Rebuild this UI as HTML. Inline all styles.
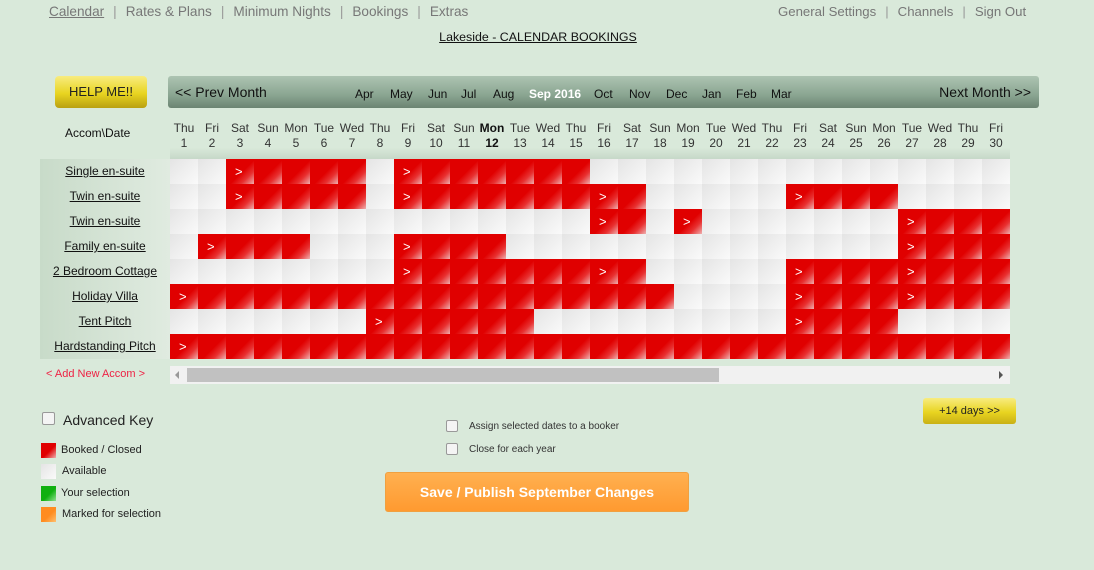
<!DOCTYPE html>
<html><head><meta charset="utf-8"><style>
*{box-sizing:border-box;margin:0;padding:0}
body{width:1094px;height:570px;background:#d9e9da;font-family:"Liberation Sans",sans-serif;position:relative;overflow:hidden;color:#222}
.abs{position:absolute}
.nav{top:4px;font-size:13.6px;color:#777}
.nav span{color:#999;margin:0 9px}
.title{left:0;width:1076px;text-align:center;top:30px;font-size:12.4px;text-decoration:underline;color:#111}
.help{left:55px;top:76px;width:92px;height:32px;border-radius:4px;background:linear-gradient(#f8ec80,#e8d420 55%,#b9a012);font-size:13px;text-align:center;line-height:32px;color:#222}
.bar{left:168px;top:76px;width:871px;height:32px;border-radius:3px;background:linear-gradient(#adc4b2,#8aa591 60%,#6b8472)}
.bar .pm{position:absolute;left:7px;top:8px;font-size:14px;color:#111}
.bar .nm{position:absolute;right:8px;top:8px;font-size:14px;color:#111}
.bar .mo{position:absolute;top:11px;font-size:12px;color:#111}
.hd{position:absolute;top:121px;width:28px;text-align:center;font-size:12px;line-height:15px;color:#333;height:38px;background:linear-gradient(#d9e9da 70%,#c6d8c8)}
.lab{position:absolute;left:40px;width:130px;height:25px;line-height:25px;text-align:center;font-size:12px;text-decoration:underline;color:#111;background:linear-gradient(90deg,#c8dbc9,#e0ebe0)}
.row{position:absolute;left:170px;display:flex}
.row i{display:block;width:28px;height:25px;font-style:normal;color:#fff;font-size:13px;line-height:25px;padding-left:9px}
.w{background:linear-gradient(135deg,#e4e4e4,#fafafa)}
.r,.a{background:linear-gradient(135deg,#e00000 55%,#e83030 75%,#efb0b0)}
.cb{width:12px;height:12px;border:1px solid #999;border-radius:2px;background:#f4f4f4}
.sw{width:15px;height:15px}
.lg{font-size:11px;color:#222}
</style></head><body>
<div class="abs nav" style="left:49px"><u style="color:#777">Calendar</u><span>|</span>Rates &amp; Plans<span>|</span>Minimum Nights<span>|</span>Bookings<span>|</span>Extras</div>
<div class="abs nav" style="left:778px;font-size:13.2px">General Settings<span>|</span>Channels<span>|</span>Sign Out</div>
<div class="abs title">Lakeside - CALENDAR BOOKINGS</div>
<div class="abs help">HELP ME!!</div>
<div class="abs bar"><div class="pm">&lt;&lt; Prev Month</div>
<div class="mo" style="left:187px">Apr</div><div class="mo" style="left:222px">May</div><div class="mo" style="left:260px">Jun</div><div class="mo" style="left:293px">Jul</div><div class="mo" style="left:325px">Aug</div><div class="mo" style="left:361px;color:#fff;font-weight:bold">Sep 2016</div><div class="mo" style="left:426px">Oct</div><div class="mo" style="left:461px">Nov</div><div class="mo" style="left:498px">Dec</div><div class="mo" style="left:534px">Jan</div><div class="mo" style="left:568px">Feb</div><div class="mo" style="left:603px">Mar</div>
<div class="nm">Next Month &gt;&gt;</div></div>
<div class="abs" style="left:65px;top:126px;font-size:12px;color:#111">Accom\Date</div>
<div class="hd" style="left:170px">Thu<br>1</div><div class="hd" style="left:198px">Fri<br>2</div><div class="hd" style="left:226px">Sat<br>3</div><div class="hd" style="left:254px">Sun<br>4</div><div class="hd" style="left:282px">Mon<br>5</div><div class="hd" style="left:310px">Tue<br>6</div><div class="hd" style="left:338px">Wed<br>7</div><div class="hd" style="left:366px">Thu<br>8</div><div class="hd" style="left:394px">Fri<br>9</div><div class="hd" style="left:422px">Sat<br>10</div><div class="hd" style="left:450px">Sun<br>11</div><div class="hd" style="left:478px;font-weight:bold;color:#111">Mon<br>12</div><div class="hd" style="left:506px">Tue<br>13</div><div class="hd" style="left:534px">Wed<br>14</div><div class="hd" style="left:562px">Thu<br>15</div><div class="hd" style="left:590px">Fri<br>16</div><div class="hd" style="left:618px">Sat<br>17</div><div class="hd" style="left:646px">Sun<br>18</div><div class="hd" style="left:674px">Mon<br>19</div><div class="hd" style="left:702px">Tue<br>20</div><div class="hd" style="left:730px">Wed<br>21</div><div class="hd" style="left:758px">Thu<br>22</div><div class="hd" style="left:786px">Fri<br>23</div><div class="hd" style="left:814px">Sat<br>24</div><div class="hd" style="left:842px">Sun<br>25</div><div class="hd" style="left:870px">Mon<br>26</div><div class="hd" style="left:898px">Tue<br>27</div><div class="hd" style="left:926px">Wed<br>28</div><div class="hd" style="left:954px">Thu<br>29</div><div class="hd" style="left:982px">Fri<br>30</div>

<div class="lab" style="top:159px">Single en-suite</div>
<div class="lab" style="top:184px">Twin en-suite</div>
<div class="lab" style="top:209px">Twin en-suite</div>
<div class="lab" style="top:234px">Family en-suite</div>
<div class="lab" style="top:259px">2 Bedroom Cottage</div>
<div class="lab" style="top:284px">Holiday Villa</div>
<div class="lab" style="top:309px">Tent Pitch</div>
<div class="lab" style="top:334px">Hardstanding Pitch</div>

<div class="row" style="top:159px"><i class="w"></i><i class="w"></i><i class="a">&gt;</i><i class="r"></i><i class="r"></i><i class="r"></i><i class="r"></i><i class="w"></i><i class="a">&gt;</i><i class="r"></i><i class="r"></i><i class="r"></i><i class="r"></i><i class="r"></i><i class="r"></i><i class="w"></i><i class="w"></i><i class="w"></i><i class="w"></i><i class="w"></i><i class="w"></i><i class="w"></i><i class="w"></i><i class="w"></i><i class="w"></i><i class="w"></i><i class="w"></i><i class="w"></i><i class="w"></i><i class="w"></i></div>
<div class="row" style="top:184px"><i class="w"></i><i class="w"></i><i class="a">&gt;</i><i class="r"></i><i class="r"></i><i class="r"></i><i class="r"></i><i class="w"></i><i class="a">&gt;</i><i class="r"></i><i class="r"></i><i class="r"></i><i class="r"></i><i class="r"></i><i class="r"></i><i class="a">&gt;</i><i class="r"></i><i class="w"></i><i class="w"></i><i class="w"></i><i class="w"></i><i class="w"></i><i class="a">&gt;</i><i class="r"></i><i class="r"></i><i class="r"></i><i class="w"></i><i class="w"></i><i class="w"></i><i class="w"></i></div>
<div class="row" style="top:209px"><i class="w"></i><i class="w"></i><i class="w"></i><i class="w"></i><i class="w"></i><i class="w"></i><i class="w"></i><i class="w"></i><i class="w"></i><i class="w"></i><i class="w"></i><i class="w"></i><i class="w"></i><i class="w"></i><i class="w"></i><i class="a">&gt;</i><i class="r"></i><i class="w"></i><i class="a">&gt;</i><i class="w"></i><i class="w"></i><i class="w"></i><i class="w"></i><i class="w"></i><i class="w"></i><i class="w"></i><i class="a">&gt;</i><i class="r"></i><i class="r"></i><i class="r"></i></div>
<div class="row" style="top:234px"><i class="w"></i><i class="a">&gt;</i><i class="r"></i><i class="r"></i><i class="r"></i><i class="w"></i><i class="w"></i><i class="w"></i><i class="a">&gt;</i><i class="r"></i><i class="r"></i><i class="r"></i><i class="w"></i><i class="w"></i><i class="w"></i><i class="w"></i><i class="w"></i><i class="w"></i><i class="w"></i><i class="w"></i><i class="w"></i><i class="w"></i><i class="w"></i><i class="w"></i><i class="w"></i><i class="w"></i><i class="a">&gt;</i><i class="r"></i><i class="r"></i><i class="r"></i></div>
<div class="row" style="top:259px"><i class="w"></i><i class="w"></i><i class="w"></i><i class="w"></i><i class="w"></i><i class="w"></i><i class="w"></i><i class="w"></i><i class="a">&gt;</i><i class="r"></i><i class="r"></i><i class="r"></i><i class="r"></i><i class="r"></i><i class="r"></i><i class="a">&gt;</i><i class="r"></i><i class="w"></i><i class="w"></i><i class="w"></i><i class="w"></i><i class="w"></i><i class="a">&gt;</i><i class="r"></i><i class="r"></i><i class="r"></i><i class="a">&gt;</i><i class="r"></i><i class="r"></i><i class="r"></i></div>
<div class="row" style="top:284px"><i class="a">&gt;</i><i class="r"></i><i class="r"></i><i class="r"></i><i class="r"></i><i class="r"></i><i class="r"></i><i class="r"></i><i class="r"></i><i class="r"></i><i class="r"></i><i class="r"></i><i class="r"></i><i class="r"></i><i class="r"></i><i class="r"></i><i class="r"></i><i class="r"></i><i class="w"></i><i class="w"></i><i class="w"></i><i class="w"></i><i class="a">&gt;</i><i class="r"></i><i class="r"></i><i class="r"></i><i class="a">&gt;</i><i class="r"></i><i class="r"></i><i class="r"></i></div>
<div class="row" style="top:309px"><i class="w"></i><i class="w"></i><i class="w"></i><i class="w"></i><i class="w"></i><i class="w"></i><i class="w"></i><i class="a">&gt;</i><i class="r"></i><i class="r"></i><i class="r"></i><i class="r"></i><i class="r"></i><i class="w"></i><i class="w"></i><i class="w"></i><i class="w"></i><i class="w"></i><i class="w"></i><i class="w"></i><i class="w"></i><i class="w"></i><i class="a">&gt;</i><i class="r"></i><i class="r"></i><i class="r"></i><i class="w"></i><i class="w"></i><i class="w"></i><i class="w"></i></div>
<div class="row" style="top:334px"><i class="a">&gt;</i><i class="r"></i><i class="r"></i><i class="r"></i><i class="r"></i><i class="r"></i><i class="r"></i><i class="r"></i><i class="r"></i><i class="r"></i><i class="r"></i><i class="r"></i><i class="r"></i><i class="r"></i><i class="r"></i><i class="r"></i><i class="r"></i><i class="r"></i><i class="r"></i><i class="r"></i><i class="r"></i><i class="r"></i><i class="r"></i><i class="r"></i><i class="r"></i><i class="r"></i><i class="r"></i><i class="r"></i><i class="r"></i><i class="r"></i></div>

<div class="abs" style="left:46px;top:368px;font-size:11px;color:#ee2244">&lt; Add New Accom &gt;</div>
<div class="abs" style="left:170px;top:366px;width:840px;height:18px;background:#f1f1f1">
<div class="abs" style="left:5px;top:5px;width:0;height:0;border-top:4px solid transparent;border-bottom:4px solid transparent;border-right:4px solid #999"></div>
<div class="abs" style="left:17px;top:2px;width:532px;height:14px;background:#c1c1c1"></div>
<div class="abs" style="left:829px;top:5px;width:0;height:0;border-top:4px solid transparent;border-bottom:4px solid transparent;border-left:4px solid #555"></div></div>

<div class="abs cb" style="left:42px;top:412px;width:13px;height:13px"></div>
<div class="abs" style="left:63px;top:412px;font-size:14px;color:#222">Advanced Key</div>
<div class="abs sw" style="left:41px;top:443px;background:linear-gradient(135deg,#e00000 55%,#efb0b0)"></div><div class="abs lg" style="left:61px;top:444px">Booked / Closed</div>
<div class="abs sw" style="left:41px;top:464px;background:linear-gradient(135deg,#e4e4e4,#fafafa)"></div><div class="abs lg" style="left:62px;top:465px">Available</div>
<div class="abs sw" style="left:41px;top:486px;background:linear-gradient(135deg,#10b010 55%,#90e090)"></div><div class="abs lg" style="left:61px;top:487px">Your selection</div>
<div class="abs sw" style="left:41px;top:507px;background:linear-gradient(135deg,#ff8c20 55%,#ffc070)"></div><div class="abs lg" style="left:62px;top:508px">Marked for selection</div>

<div class="abs cb" style="left:446px;top:420px"></div><div class="abs" style="left:469px;top:421px;font-size:10px;color:#333">Assign selected dates to a booker</div>
<div class="abs cb" style="left:446px;top:443px"></div><div class="abs" style="left:469px;top:444px;font-size:10px;color:#333">Close for each year</div>
<div class="abs" style="left:385px;top:472px;width:304px;height:40px;border-radius:3px;border:1px solid #f0a040;background:linear-gradient(#ffb050,#ff9a30);color:#fff;font-weight:bold;font-size:14px;text-align:center;line-height:38px">Save / Publish September Changes</div>
<div class="abs" style="left:923px;top:398px;width:93px;height:26px;border-radius:3px;background:linear-gradient(#f8ec80,#e8d420 55%,#c9b015);font-size:11px;text-align:center;line-height:26px;color:#222">+14 days &gt;&gt;</div>
</body></html>
